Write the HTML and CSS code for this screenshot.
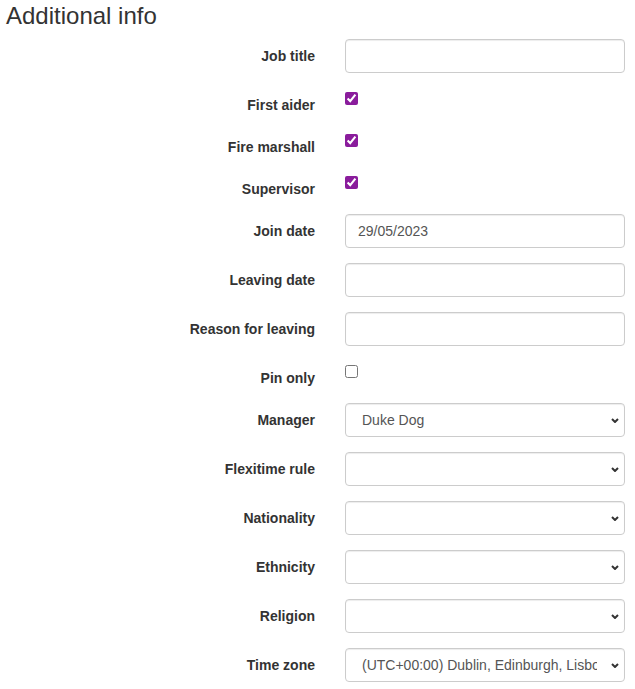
FILE: index.html
```html
<!DOCTYPE html>
<html lang="en">
<head>
<meta charset="utf-8">
<title>Additional info</title>
<link rel="stylesheet" href="styles.css">
</head>
<body>
<h3 class="section-title">Additional info</h3>
<form class="form">
  <div class="row">
    <label class="label" for="jobtitle">Job title</label>
    <input class="control" id="jobtitle" type="text">
  </div>
  <div class="row row-check">
    <label class="label" for="firstaider">First aider</label>
    <input class="check" id="firstaider" type="checkbox" checked>
  </div>
  <div class="row row-check">
    <label class="label" for="firemarshall">Fire marshall</label>
    <input class="check" id="firemarshall" type="checkbox" checked>
  </div>
  <div class="row row-check">
    <label class="label" for="supervisor">Supervisor</label>
    <input class="check" id="supervisor" type="checkbox" checked>
  </div>
  <div class="row">
    <label class="label" for="joindate">Join date</label>
    <input class="control" id="joindate" type="text" value="29/05/2023">
  </div>
  <div class="row">
    <label class="label" for="leavingdate">Leaving date</label>
    <input class="control" id="leavingdate" type="text">
  </div>
  <div class="row">
    <label class="label" for="reason">Reason for leaving</label>
    <input class="control" id="reason" type="text">
  </div>
  <div class="row row-check">
    <label class="label" for="pinonly">Pin only</label>
    <input class="check" id="pinonly" type="checkbox">
  </div>
  <div class="row">
    <label class="label" for="manager">Manager</label>
    <div class="select-wrap">
      <select class="control select" id="manager"><option>Duke Dog</option></select>
      <svg class="chevron" width="8" height="5" viewBox="0 0 8 5"><path d="M1 1 L4 4 L7 1" fill="none" stroke="#333" stroke-width="2"/></svg>
    </div>
  </div>
  <div class="row">
    <label class="label" for="flexi">Flexitime rule</label>
    <div class="select-wrap">
      <select class="control select" id="flexi"><option></option></select>
      <svg class="chevron" width="8" height="5" viewBox="0 0 8 5"><path d="M1 1 L4 4 L7 1" fill="none" stroke="#333" stroke-width="2"/></svg>
    </div>
  </div>
  <div class="row">
    <label class="label" for="nationality">Nationality</label>
    <div class="select-wrap">
      <select class="control select" id="nationality"><option></option></select>
      <svg class="chevron" width="8" height="5" viewBox="0 0 8 5"><path d="M1 1 L4 4 L7 1" fill="none" stroke="#333" stroke-width="2"/></svg>
    </div>
  </div>
  <div class="row">
    <label class="label" for="ethnicity">Ethnicity</label>
    <div class="select-wrap">
      <select class="control select" id="ethnicity"><option></option></select>
      <svg class="chevron" width="8" height="5" viewBox="0 0 8 5"><path d="M1 1 L4 4 L7 1" fill="none" stroke="#333" stroke-width="2"/></svg>
    </div>
  </div>
  <div class="row">
    <label class="label" for="religion">Religion</label>
    <div class="select-wrap">
      <select class="control select" id="religion"><option></option></select>
      <svg class="chevron" width="8" height="5" viewBox="0 0 8 5"><path d="M1 1 L4 4 L7 1" fill="none" stroke="#333" stroke-width="2"/></svg>
    </div>
  </div>
  <div class="row">
    <label class="label" for="timezone">Time zone</label>
    <div class="select-wrap">
      <select class="control select" id="timezone"><option>(UTC+00:00) Dublin, Edinburgh, Lisbon, London</option></select>
      <svg class="chevron" width="8" height="5" viewBox="0 0 8 5"><path d="M1 1 L4 4 L7 1" fill="none" stroke="#333" stroke-width="2"/></svg>
    </div>
  </div>
</form>
</body>
</html>
```
FILE: styles.css
```css
html, body {
  margin: 0;
  padding: 0;
  background: #fff;
}
body {
  font-family: "Liberation Sans", Arial, Helvetica, sans-serif;
  font-size: 14px;
  line-height: 20px;
  color: #333;
}
.section-title {
  margin: 3px 0 10px 6px;
  font-size: 24px;
  line-height: 26px;
  font-weight: 500;
  color: #333;
}
.form {
  margin: 0;
  width: 625px;
}
.row {
  display: grid;
  grid-template-columns: 315px 280px;
  column-gap: 30px;
  margin-bottom: 15px;
  align-items: start;
}
.row-check {
  min-height: 27px;
}
.label {
  padding-top: 7px;
  text-align: right;
  font-weight: 700;
  line-height: 20px;
  color: #333;
}
.control {
  box-sizing: border-box;
  display: block;
  width: 280px;
  height: 34px;
  margin: 0;
  padding: 6px 12px;
  border: 1px solid #ccc;
  border-radius: 4px;
  background: #fff;
  font-family: "Liberation Sans", Arial, Helvetica, sans-serif;
  font-size: 14px;
  line-height: 20px;
  color: #555;
  box-shadow: inset 0 1px 1px rgba(0, 0, 0, 0.075);
  outline: none;
}
.check {
  display: block;
  width: 13px;
  height: 13px;
  margin: 4px 0 0 0;
  accent-color: #8a1c9c;
}
.select-wrap {
  position: relative;
  width: 280px;
  overflow: hidden;
}
.select {
  appearance: none;
  -webkit-appearance: none;
  padding: 6px 27px 6px 16px;
  text-overflow: clip;
  white-space: nowrap;
  overflow: hidden;
}
.chevron {
  position: absolute;
  right: 6px;
  top: 15px;
  pointer-events: none;
}
```
